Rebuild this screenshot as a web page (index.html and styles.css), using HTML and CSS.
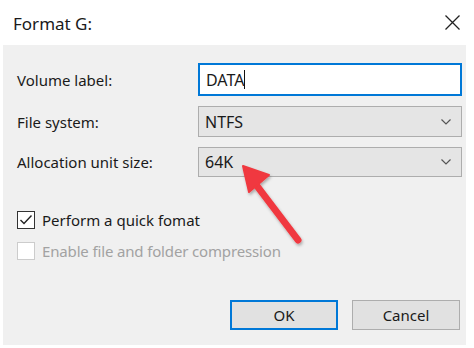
FILE: index.html
```
<!DOCTYPE html>
<html lang="en">
<head>
    <meta charset="UTF-8">
    <title>Format G:</title>
    <link rel="stylesheet" href="styles.css">
</head>
<body>
    <div class="dialog">
        <!-- Title bar -->
        <div class="titlebar">
            <span class="title">Format G:</span>
            <svg class="close" width="15" height="15" viewBox="0 0 15 15">
                <path d="M0.5 0.5 L14.5 14.5 M14.5 0.5 L0.5 14.5" stroke="#222" stroke-width="1.3" fill="none"/>
            </svg>
        </div>

        <!-- Body -->
        <div class="panel">
            <div class="form">
                <label class="label">Volume label:</label>
                <div class="textbox">DATA<span class="caret"></span></div>

                <label class="label">File system:</label>
                <div class="select">
                    <span>NTFS</span>
                    <svg class="chevron" width="10" height="6" viewBox="0 0 10 6"><path d="M0.5 0.5 L5 5 L9.5 0.5" stroke="#555" stroke-width="1.2" fill="none"/></svg>
                </div>

                <label class="label">Allocation unit size:</label>
                <div class="select select-last">
                    <span>64K</span>
                    <svg class="chevron" width="10" height="6" viewBox="0 0 10 6"><path d="M0.5 0.5 L5 5 L9.5 0.5" stroke="#555" stroke-width="1.2" fill="none"/></svg>
                </div>
            </div>

            <div class="checks">
                <div class="check">
                    <span class="box">
                        <svg width="16" height="16" viewBox="0 0 16 16"><path d="M2.5 8 L6 11.5 L13.5 3.5" stroke="#222" stroke-width="1.4" fill="none"/></svg>
                    </span>
                    <span>Perform a quick fomat</span>
                </div>
                <div class="check disabled">
                    <span class="box"></span>
                    <span>Enable file and folder compression</span>
                </div>
            </div>

            <div class="buttons">
                <button class="btn btn-default">OK</button>
                <button class="btn">Cancel</button>
            </div>
        </div>

        <!-- Red annotation arrow -->
        <svg class="arrow" width="80" height="90" viewBox="0 0 80 90">
            <defs>
                <filter id="shadow" x="-20%" y="-20%" width="140%" height="140%">
                    <feDropShadow dx="1" dy="2" stdDeviation="1.5" flood-color="#000" flood-opacity="0.3"/>
                </filter>
            </defs>
            <g filter="url(#shadow)">
                <path d="M63 80 L19 22" stroke="#f0393f" stroke-width="7" stroke-linecap="round" fill="none"/>
                <path d="M8 6 L34 15 L14 32 Z" fill="#f0393f" stroke="#f0393f" stroke-width="2" stroke-linejoin="round"/>
            </g>
        </svg>
    </div>
</body>
</html>
```

FILE: styles.css
```
body {
    margin: 0;
    padding: 0;
    background: white;
    font-family: 'Noto Sans', 'Open Sans', sans-serif;
    color: #1a1a1a;
}

.dialog {
    position: relative;
    width: 474px;
    height: 348px;
    display: flex;
    flex-direction: column;
}

/* Title bar */
.titlebar {
    height: 45px;
    display: flex;
    align-items: center;
    justify-content: space-between;
    padding: 0 14px 0 13px;
}

.title {
    font-size: 17px;
    margin-top: 2px;
}

.close {
    margin-top: 0;
}

/* Body */
.panel {
    background: #f0f0f0;
    margin: 0 8px 3px 3px;
    height: 300px;
    padding: 18px 4px 0 14px;
    box-sizing: border-box;
    font-size: 15px;
}

.form {
    display: grid;
    grid-template-columns: 181px 1fr;
    row-gap: 10px;
    align-items: center;
}

.label {
    line-height: 20px;
}

.textbox {
    height: 33px;
    box-sizing: border-box;
    border: 2px solid #0078d7;
    background: white;
    padding: 0 6px;
    display: flex;
    align-items: center;
    font-size: 16px;
}

.caret {
    width: 1px;
    height: 19px;
    background: #111;
}

.select {
    height: 31px;
    box-sizing: border-box;
    border: 1px solid #adadad;
    background: #e5e5e5;
    padding: 0 10px 0 6px;
    display: flex;
    align-items: center;
    justify-content: space-between;
    font-size: 16px;
}

.select-last {
    height: 30px;
}

/* Checkboxes */
.checks {
    margin-top: 34px;
    display: flex;
    flex-direction: column;
    gap: 13px;
}

.check {
    display: flex;
    align-items: center;
    gap: 7px;
    height: 18px;
}

.box {
    width: 18px;
    height: 18px;
    box-sizing: border-box;
    border: 1px solid #333;
    background: white;
    display: flex;
    align-items: center;
    justify-content: center;
}

.disabled {
    color: #a2a2a2;
    letter-spacing: -0.15px;
}

.disabled .box {
    border-color: #cccccc;
}

/* Buttons */
.buttons {
    margin-top: 40px;
    display: flex;
    justify-content: flex-end;
    gap: 14px;
    padding-right: 2px;
}

.btn {
    width: 108px;
    height: 30px;
    box-sizing: border-box;
    border: 1px solid #adadad;
    background: #e1e1e1;
    font-family: 'Noto Sans', 'Open Sans', sans-serif;
    font-size: 15px;
    color: #1a1a1a;
    padding: 0;
}

.btn-default {
    border: 2px solid #0078d7;
}

.arrow {
    position: absolute;
    left: 235px;
    top: 160px;
}
```
